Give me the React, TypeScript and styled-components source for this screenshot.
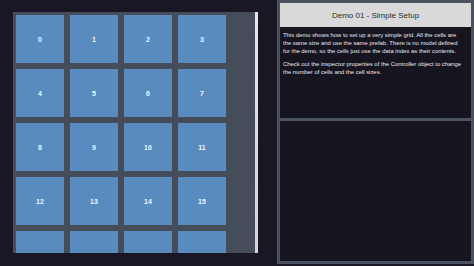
import styled, { createGlobalStyle } from 'styled-components';

const GlobalStyle = createGlobalStyle`
  html, body {
    margin: 0;
    padding: 0;
    background: #1a1724;
    font-family: "Liberation Sans", Arial, sans-serif;
  }
`;

const Screen = styled.div`
  width: 474px;
  height: 266px;
  display: flex;
  overflow: hidden;
  background: #1a1724;
`;

const GridArea = styled.div`
  flex: 0 0 277px;
  box-sizing: border-box;
  padding: 12px 0 0 13px;
  display: flex;
  align-items: flex-start;
`;

const ScrollView = styled.div`
  width: 242px;
  height: 241px;
  background: #444d59;
  padding: 3px 0 0 3px;
  box-sizing: border-box;
  overflow: hidden;
`;

const Grid = styled.div`
  display: grid;
  grid-template-columns: repeat(4, 48px);
  grid-auto-rows: 48px;
  gap: 6px;
`;

const Cell = styled.div`
  background: #5a8bbf;
  display: flex;
  align-items: center;
  justify-content: center;
  color: #f2f6ff;
  font-weight: bold;
  font-size: 7px;
`;

const Scrollbar = styled.div`
  width: 3px;
  height: 241px;
  background: linear-gradient(#e6e6e6, #d4d4d8);
`;

const SidePanel = styled.div`
  flex: 0 0 197px;
  height: 264px;
  box-sizing: border-box;
  background: #49525e;
  padding: 3px;
  display: flex;
  flex-direction: column;
  gap: 3px;
`;

const TitleBar = styled.div`
  height: 24px;
  margin-bottom: -3px;
  background: #d9d9d9;
  color: #2b2b2e;
  font-size: 8px;
  display: flex;
  align-items: center;
  justify-content: center;
`;

const Box = styled.div<{ $grow?: boolean }>`
  background: #16141f;
  flex: ${(p) => (p.$grow ? '1' : '0 0 91px')};
  box-sizing: border-box;
  padding: 4px 8px 4px 3px;
  color: #e8e8ec;
  font-size: 5.9px;
  line-height: 8px;
`;

const Para = styled.p`
  margin: 0 0 5px;
`;

export default function App() {
  const cells = Array.from({ length: 20 }, (_, i) => i);
  return (
    <>
      <GlobalStyle />
      <Screen>
        <GridArea>
          <ScrollView>
            <Grid>
              {cells.map((i) => (
                <Cell key={i}>{i}</Cell>
              ))}
            </Grid>
          </ScrollView>
          <Scrollbar />
        </GridArea>
        <SidePanel>
          <TitleBar>Demo 01 - Simple Setup</TitleBar>
          <Box>
            <Para>
              This demo shows how to set up a very simple grid. All the cells are the same size and
              use the same prefab. There is no model defined for the demo, so the cells just use the
              data index as their contents.
            </Para>
            <Para>
              Check out the inspector properties of the Controller object to change the number of
              cells and the cell sizes.
            </Para>
          </Box>
          <Box $grow />
        </SidePanel>
      </Screen>
    </>
  );
}
